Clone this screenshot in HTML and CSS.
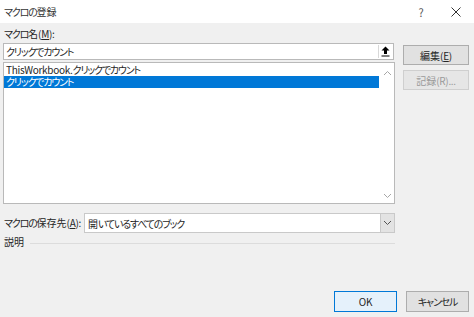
FILE: index.html
```html
<!DOCTYPE html>
<html lang="ja">
<head>
<meta charset="utf-8">
<title>マクロの登録</title>
<link rel="stylesheet" href="styles.css">
</head>
<body>
<div class="dlg">
  <div class="titlebar">
    <span class="title">マクロの<span class="kj">登録</span></span>
    <span class="tbtn help">?</span>
    <span class="tbtn close">
      <svg width="10" height="10" viewBox="0 0 10 10"><path d="M0.5 0.5L9.5 9.5M9.5 0.5L0.5 9.5" stroke="#333" stroke-width="1"/></svg>
    </span>
  </div>
  <div class="body">
    <div class="main">
      <div class="left">
        <div class="lbl">マクロ<span class="kj">名</span><span class="en">(<u>M</u>):</span></div>
        <div class="namebox">
          <span class="val">クリックでカウント</span>
          <span class="upbtn">
            <svg width="9" height="11" viewBox="0 0 9 11"><path d="M4.5 0.5L0.5 4.5H3V8H6V4.5H8.5Z" fill="#000"/><rect x="0.5" y="9.5" width="8" height="1" fill="#000"/></svg>
          </span>
        </div>
        <div class="list">
          <div class="items">
            <div class="item"><span class="en">ThisWorkbook.</span>クリックでカウント</div>
            <div class="item sel">クリックでカウント</div>
          </div>
          <div class="vscroll">
            <svg width="9" height="6" viewBox="0 0 9 6"><path d="M1 5L4.5 1.5L8 5" fill="none" stroke="#a6a6a6" stroke-width="1"/></svg>
            <svg width="9" height="6" viewBox="0 0 9 6"><path d="M1 1L4.5 4.5L8 1" fill="none" stroke="#a6a6a6" stroke-width="1"/></svg>
          </div>
        </div>
        <div class="storerow">
          <span class="lbl">マクロの<span class="kj">保存先</span><span class="en">(<u>A</u>):</span></span>
          <div class="combo">
            <span class="val"><span class="kj">開</span>いているすべてのブック</span>
            <span class="drop">
              <svg width="9" height="6" viewBox="0 0 9 6"><path d="M1 1L4.5 4.5L8 1" fill="none" stroke="#555" stroke-width="1"/></svg>
            </span>
          </div>
        </div>
        <div class="desc">
          <span class="lbl kj">説明</span>
          <span class="rule"></span>
        </div>
      </div>
      <div class="side">
        <div class="btn"><span class="kj">編集</span><span class="en">(<u>E</u>)</span></div>
        <div class="btn off"><span class="kj">記録</span><span class="en">(R)...</span></div>
      </div>
    </div>
    <div class="foot">
      <div class="btn ok"><span class="en">OK</span></div>
      <div class="btn">キャンセル</div>
    </div>
  </div>
</div>
</body>
</html>
```

FILE: styles.css
```css
html, body { margin:0; padding:0; }
body { font-family:"Noto Sans CJK JP", sans-serif; font-size:10px; color:#262626; background:#f0f0f0; }
u { text-decoration:underline; text-underline-offset:1px; }
.en { letter-spacing:-0.3px; }
.kj { letter-spacing:0; }

.dlg { width:474px; height:317px; display:flex; flex-direction:column; background:#f0f0f0; font-feature-settings:"palt"; letter-spacing:-1.2px; }

.titlebar { height:23px; background:#fff; display:flex; align-items:center; padding-left:4px; }
.titlebar .title { flex:1; color:#333; }
.tbtn { width:34px; display:flex; justify-content:center; align-items:center; color:#555; letter-spacing:0; }
.tbtn.help { margin-right:1px; font-size:11px; }
.tbtn.close { margin-right:1px; }

.body { flex:1; display:flex; flex-direction:column; padding:3px 5px 5px 3px; }
.main { display:flex; gap:8px; }
.left { width:392px; display:flex; flex-direction:column; }
.lbl { line-height:16px; padding-left:1px; white-space:nowrap; }

.namebox { width:389px; height:15px; margin-top:1px; background:#fff; border:1px solid #b9b9b9; display:flex; align-items:center; }
.namebox .val { flex:1; padding-left:2px; line-height:15px; }
.upbtn { width:13px; height:13px; border-left:1px solid #d8d8d8; display:flex; justify-content:center; align-items:center; margin-right:1px; }

.list { height:140px; margin-top:2px; background:#fff; border:1px solid #b9b9b9; display:flex; }
.items { flex:1; padding-top:1px; }
.item { line-height:12px; height:12px; padding-left:2px; white-space:nowrap; }
.item.sel { background:#0078d7; color:#fff; margin-right:1px; }
.vscroll { width:14px; display:flex; flex-direction:column; justify-content:space-between; align-items:center; padding:7px 0 4px; }

.storerow { display:flex; align-items:center; margin-top:9px; }
.storerow .lbl { width:80px; }
.combo { flex:1; height:18px; background:#fff; border:1px solid #c9c9c9; display:flex; align-items:center; }
.combo .val { flex:1; padding-left:3px; }
.drop { width:13px; height:18px; background:#e3e3e3; border-left:1px solid #c9c9c9; display:flex; justify-content:center; align-items:center; }

.desc { display:flex; align-items:center; gap:6px; margin-top:1px; }
.desc .rule { flex:1; height:1px; background:#dcdcdc; margin-top:2px; }

.side { width:66px; display:flex; flex-direction:column; gap:5px; padding-top:19px; }
.btn { height:18px; border:1px solid #adadad; background:#e1e1e1; display:flex; justify-content:center; align-items:center; white-space:nowrap; }
.btn.off { border-color:#cfcfcf; background:#e6e6e6; color:#9a9a9a; }

.foot { margin-top:auto; display:flex; justify-content:flex-end; gap:9px; }
.foot .btn { width:61px; height:19px; }
.btn.ok { border-color:#0078d7; background:#e5f1fb; }
```
